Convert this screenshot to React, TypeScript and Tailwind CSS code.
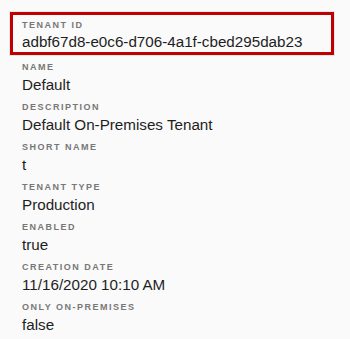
import React from 'react';

const fields = [
  { label: 'NAME', value: 'Default' },
  { label: 'DESCRIPTION', value: 'Default On-Premises Tenant' },
  { label: 'SHORT NAME', value: 't' },
  { label: 'TENANT TYPE', value: 'Production' },
  { label: 'ENABLED', value: 'true' },
  { label: 'CREATION DATE', value: '11/16/2020 10:10 AM' },
  { label: 'ONLY ON-PREMISES', value: 'false' },
];

const Field = ({ label, value }: { label: string; value: string }) => (
  <div>
    <div className="text-[9px] leading-[12px] font-bold tracking-[1.5px] text-[#777]">{label}</div>
    <div className="mt-[3px] text-[15.2px] leading-[18px] text-[#1e1e1e]">{value}</div>
  </div>
);

const App = () => {
  return (
    <div
      className="w-[350px] h-[339px] overflow-hidden bg-[#fafafa] pt-[12px]"
      style={{ fontFamily: '"Liberation Sans", Arial, sans-serif' }}
    >
      <div className="ml-[10px] w-[324px] h-[43px] border-[3px] border-[#c00000] pl-[9px] pt-[4px] shadow-[0_0_0_1px_#e6e6e6]">
        <div className="text-[9px] leading-[12px] font-bold tracking-[1.5px] text-[#777]">TENANT ID</div>
        <div className="mt-[2px] text-[15.2px] leading-[18px] text-[#1e1e1e]">adbf67d8-e0c6-d706-4a1f-cbed295dab23</div>
      </div>
      <div className="mt-[6px] pl-[22px] flex flex-col gap-[7px]">
        {fields.map((f) => (
          <Field key={f.label} label={f.label} value={f.value} />
        ))}
      </div>
    </div>
  );
};

export default App;
